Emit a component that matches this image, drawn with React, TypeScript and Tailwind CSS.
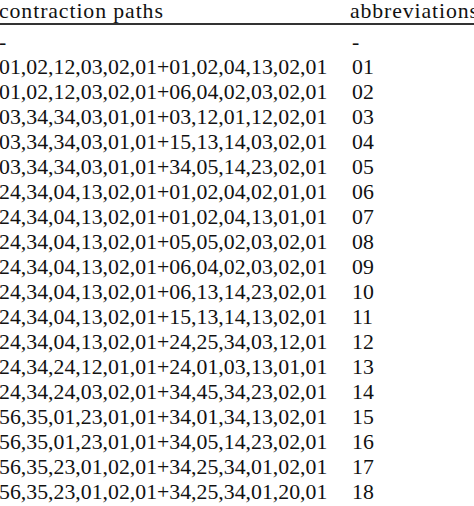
const SERIF = "'Liberation Serif', 'Times New Roman', serif"

const rows: [string, string][] = [
  ['-', '-'],
  ['01,02,12,03,02,01+01,02,04,13,02,01', '01'],
  ['01,02,12,03,02,01+06,04,02,03,02,01', '02'],
  ['03,34,34,03,01,01+03,12,01,12,02,01', '03'],
  ['03,34,34,03,01,01+15,13,14,03,02,01', '04'],
  ['03,34,34,03,01,01+34,05,14,23,02,01', '05'],
  ['24,34,04,13,02,01+01,02,04,02,01,01', '06'],
  ['24,34,04,13,02,01+01,02,04,13,01,01', '07'],
  ['24,34,04,13,02,01+05,05,02,03,02,01', '08'],
  ['24,34,04,13,02,01+06,04,02,03,02,01', '09'],
  ['24,34,04,13,02,01+06,13,14,23,02,01', '10'],
  ['24,34,04,13,02,01+15,13,14,13,02,01', '11'],
  ['24,34,04,13,02,01+24,25,34,03,12,01', '12'],
  ['24,34,24,12,01,01+24,01,03,13,01,01', '13'],
  ['24,34,24,03,02,01+34,45,34,23,02,01', '14'],
  ['56,35,01,23,01,01+34,01,34,13,02,01', '15'],
  ['56,35,01,23,01,01+34,05,14,23,02,01', '16'],
  ['56,35,23,01,02,01+34,25,34,01,02,01', '17'],
  ['56,35,23,01,02,01+34,25,34,01,20,01', '18'],
]

export default function App() {
  return (
    <div className="w-[474px] h-[506px] overflow-hidden bg-white text-[#111]" style={{ fontFamily: SERIF }}>
      <div className="-ml-[1px] w-[480px]">
        {/* header */}
        <div className="flex h-[23px] items-center text-[21.8px] leading-none tracking-[0.9px]">
          <span className="w-[353px]">contraction paths</span>
          <span className="whitespace-nowrap">abbreviations</span>
        </div>
        <div className="h-[2px] bg-[#333]" />
        <div className="h-[5px]" />
        {rows.map(([path, abbr], i) => (
          <div key={i} className="flex h-[25px] items-center text-[21.8px] leading-none">
            <span className="w-[353px] whitespace-nowrap">{path}</span>
            <span>{abbr}</span>
          </div>
        ))}
      </div>
    </div>
  )
}
